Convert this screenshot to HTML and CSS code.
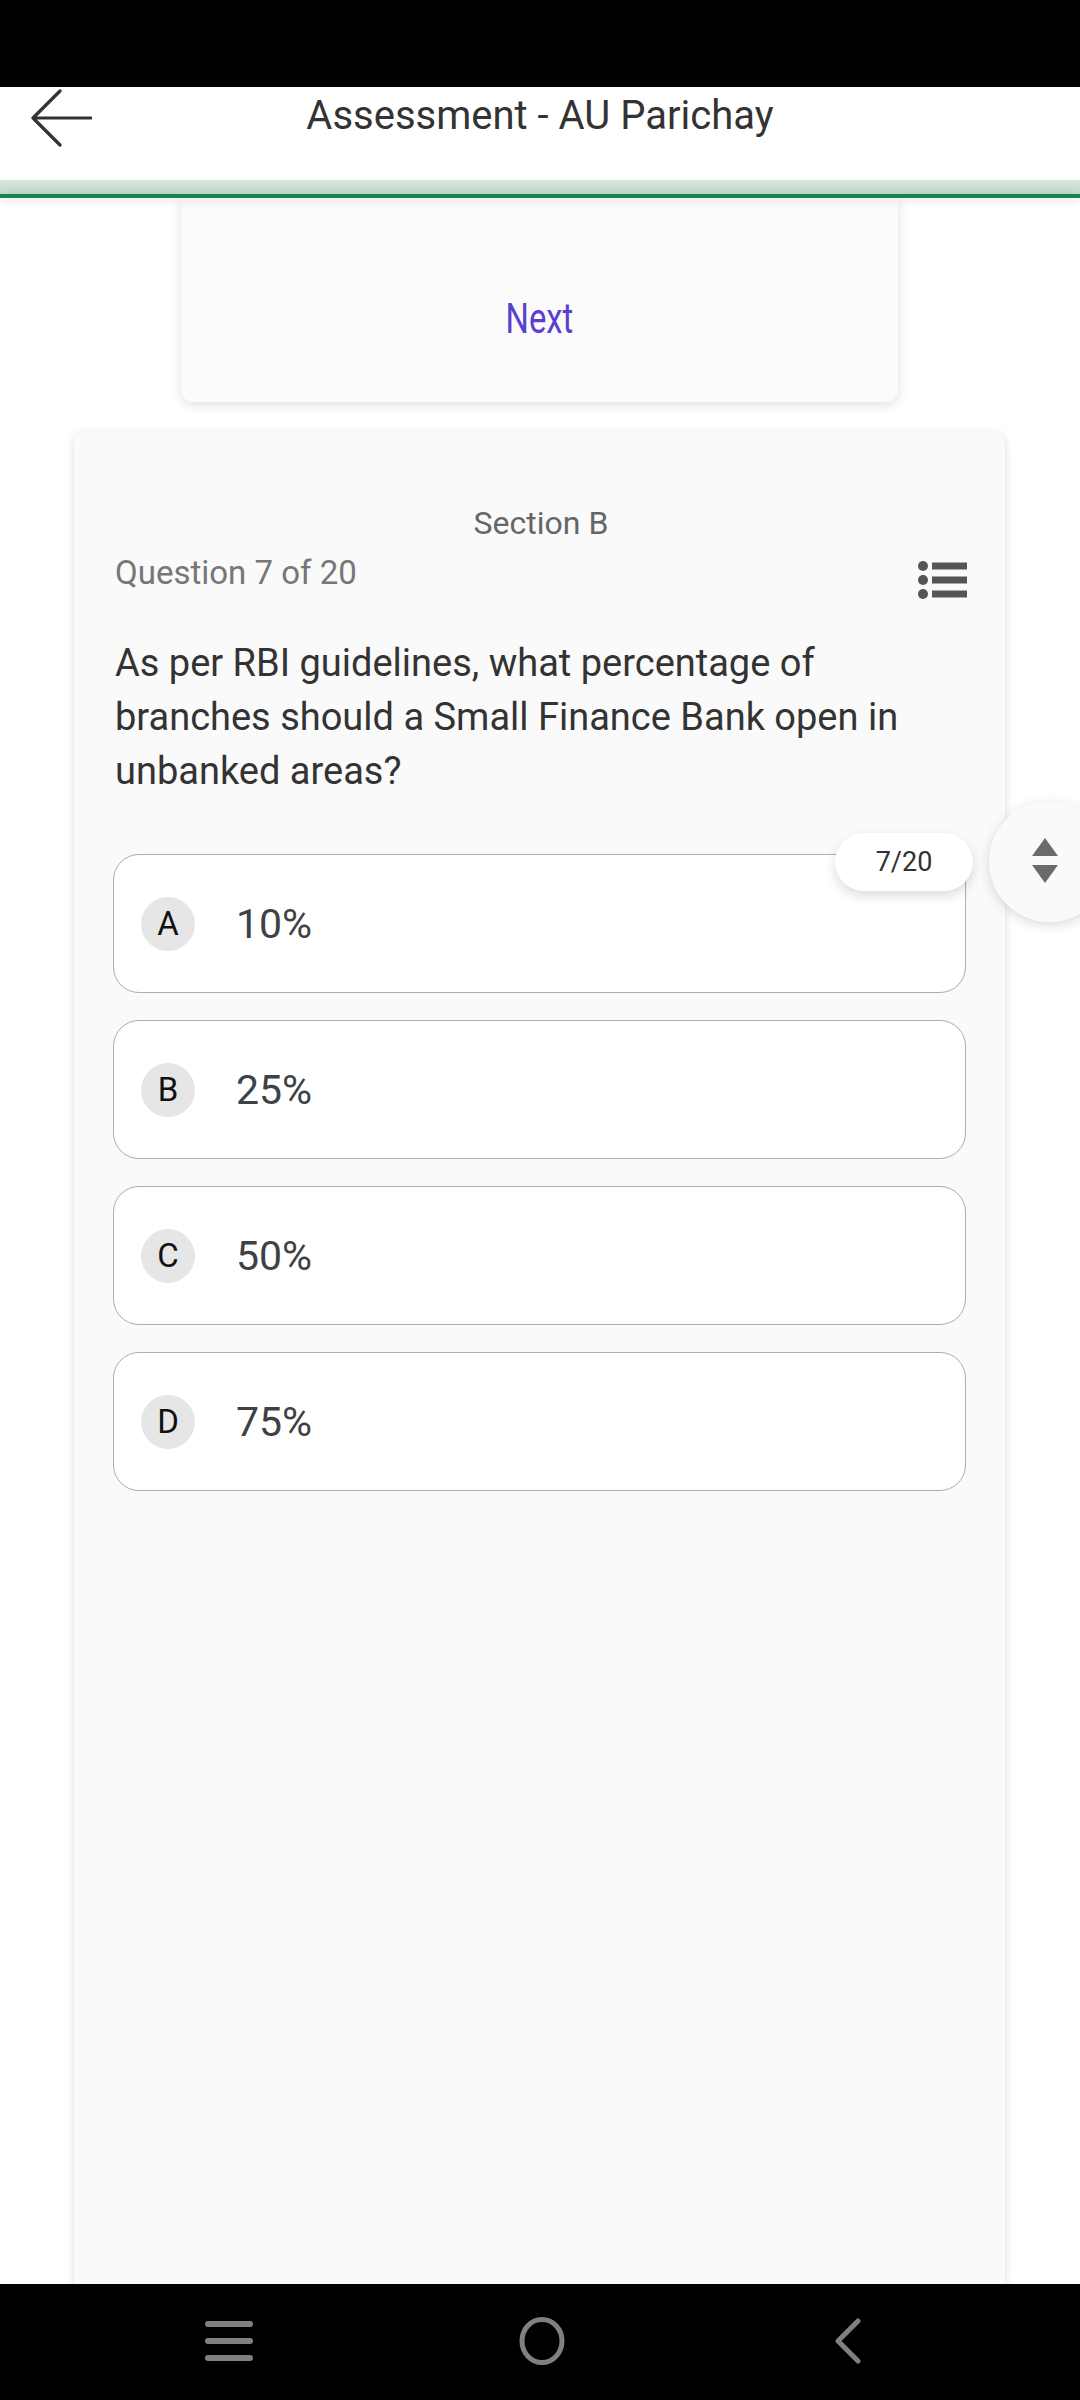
FILE: index.html
```html
<!DOCTYPE html>
<html lang="en">
<head>
<meta charset="utf-8">
<title>Assessment - AU Parichay</title>
<link rel="stylesheet" href="styles.css">
</head>
<body>
<div class="screen">
  <div class="status"></div>
  <header class="appbar">
    <div class="back">
      <svg width="62" height="60" viewBox="0 0 62 60"><path d="M30 3 L3 30 L30 57 M3 30 L61 30" fill="none" stroke="#333" stroke-width="3.2" stroke-linecap="round" stroke-linejoin="round"/></svg>
    </div>
    <div class="title">Assessment - AU Parichay</div>
    <div></div>
  </header>
  <div class="band"></div>
  <div class="greenline"></div>
  <main class="content">
    <div class="next-card"><span class="next">Next</span></div>
    <section class="quiz-card">
      <div class="section">Section B</div>
      <div class="qrow">
        <div class="qcount">Question 7 of 20</div>
        <svg class="listicon" width="49" height="38" viewBox="0 0 49 38">
          <circle cx="5" cy="5" r="5" fill="#555"/><rect x="14" y="1.5" width="35" height="7" fill="#555"/>
          <circle cx="5" cy="19" r="5" fill="#555"/><rect x="14" y="15.5" width="35" height="7" fill="#555"/>
          <circle cx="5" cy="33" r="5" fill="#555"/><rect x="14" y="29.5" width="35" height="7" fill="#555"/>
        </svg>
      </div>
      <p class="question">As per RBI guidelines, what percentage of branches should a Small Finance Bank open in unbanked areas?</p>
      <div class="options">
        <div class="pill">7/20</div>
        <div class="option"><span class="letter">A</span><span class="opt-text">10%</span></div>
        <div class="option"><span class="letter">B</span><span class="opt-text">25%</span></div>
        <div class="option"><span class="letter">C</span><span class="opt-text">50%</span></div>
        <div class="option"><span class="letter">D</span><span class="opt-text">75%</span></div>
      </div>
    </section>
  </main>
  <nav class="navbar">
    <svg width="48" height="42" viewBox="0 0 48 42"><rect x="0" y="1" width="48" height="6" rx="3" fill="#808080"/><rect x="0" y="18" width="48" height="6" rx="3" fill="#808080"/><rect x="0" y="35" width="48" height="6" rx="3" fill="#808080"/></svg>
    <svg width="50" height="50" viewBox="0 0 50 50"><ellipse cx="25" cy="25" rx="20" ry="21.5" fill="none" stroke="#808080" stroke-width="5"/></svg>
    <svg width="30" height="46" viewBox="0 0 30 46"><path d="M25 3 L5 23 L25 43" fill="none" stroke="#808080" stroke-width="5" stroke-linecap="round" stroke-linejoin="round"/></svg>
  </nav>
  <div class="scroller">
    <svg width="28" height="48" viewBox="0 0 28 48"><path d="M14 0 L27 18 L1 18 Z" fill="#6b6b6b"/><path d="M1 27 L27 27 L14 45 Z" fill="#6b6b6b"/></svg>
  </div>
</div>
</body>
</html>
```
FILE: styles.css
```css
* { box-sizing: border-box; }
html, body { margin: 0; padding: 0; }
body {
  width: 1080px;
  height: 2400px;
  overflow: hidden;
  background: #fff;
  font-family: Roboto, "Noto Sans", sans-serif;
}
.screen {
  position: relative;
  width: 1080px;
  height: 2400px;
  display: flex;
  flex-direction: column;
}
.status { height: 87px; background: #000; flex: none; }
.appbar {
  height: 93px;
  flex: none;
  background: #fff;
  display: grid;
  grid-template-columns: 1fr auto 1fr;
  align-items: start;
  position: relative;
  z-index: 3;
}
.back { padding-left: 30px; padding-top: 1px; display: flex; }
.title {
  font-size: 40px;
  color: #333;
  padding-top: 5px;
}
.band {
  height: 14px;
  flex: none;
  background: linear-gradient(#d9e7e0, #c0d6ca);
  position: relative;
  z-index: 3;
}
.greenline {
  height: 4px;
  flex: none;
  background: #15864a;
  position: relative;
  z-index: 3;
  box-shadow: 0 3px 8px rgba(0,0,0,0.12);
}
.content {
  flex: 1;
  display: flex;
  flex-direction: column;
  overflow: hidden;
  min-height: 0;
}
.next-card {
  flex: none;
  height: 204px;
  margin: 0 182px 0 181px;
  padding-top: 36px;
  background: #fbfbfb;
  border-radius: 0 0 12px 12px;
  box-shadow: 0 3px 12px rgba(0,0,0,0.13);
  display: flex;
  align-items: center;
  justify-content: center;
}
.next {
  display: inline-block;
  font-size: 42px;
  color: #5a3ed2;
  transform: scaleX(0.78);
}
.quiz-card {
  flex: 1;
  margin: 30px 75px 0 74px;
  background: #fafafa;
  border-radius: 12px 12px 0 0;
  box-shadow: 0 2px 10px rgba(0,0,0,0.14);
  padding: 71px 38px 0 41px;
}
.section {
  text-align: center;
  font-size: 32px;
  line-height: 40px;
  color: #666;
}
.qrow {
  margin-top: 10px;
  display: flex;
  justify-content: space-between;
  align-items: flex-start;
}
.qcount {
  font-size: 33px;
  line-height: 40px;
  color: #777;
}
.listicon { margin-top: 8px; display: block; }
.question {
  margin: 37px 0 0 0;
  font-size: 38px;
  line-height: 54px;
  color: #333;
}
.options {
  position: relative;
  margin-top: 56px;
  margin-left: -2px;
  width: 853px;
  display: flex;
  flex-direction: column;
  gap: 27px;
}
.option {
  height: 139px;
  background: #fff;
  border: 1.5px solid #a9aeaf;
  border-radius: 26px;
  display: flex;
  align-items: center;
  padding-left: 27px;
}
.letter {
  width: 54px;
  height: 54px;
  border-radius: 50%;
  background: #e6e6e6;
  display: flex;
  align-items: center;
  justify-content: center;
  font-family: Roboto, "Liberation Sans", sans-serif;
  font-size: 33px;
  color: #111;
  flex: none;
}
.opt-text {
  margin-left: 41px;
  font-size: 41px;
  color: #3c4245;
}
.pill {
  position: absolute;
  top: -21px;
  right: -7px;
  width: 138px;
  height: 58px;
  border-radius: 29px;
  background: #fff;
  box-shadow: 0 5px 12px rgba(0,0,0,0.14);
  display: flex;
  align-items: center;
  justify-content: center;
  font-size: 27px;
  color: #333;
  z-index: 2;
}
.navbar {
  height: 116px;
  flex: none;
  background: #000;
  display: flex;
  align-items: center;
  padding-bottom: 2px;
}
.navbar svg:nth-child(1) { margin-left: 205px; }
.navbar svg:nth-child(2) { margin-left: 264px; }
.navbar svg:nth-child(3) { margin-left: 266px; }
.scroller {
  position: absolute;
  left: 989px;
  top: 801px;
  width: 121px;
  height: 121px;
  border-radius: 50%;
  background: #fafafa;
  box-shadow: 0 3px 12px rgba(0,0,0,0.15);
  display: flex;
  align-items: center;
  padding-left: 42px;
}
```
